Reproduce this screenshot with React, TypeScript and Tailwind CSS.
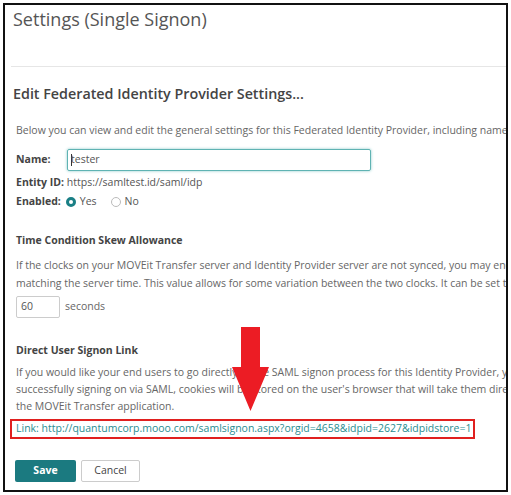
import React from "react";

const Label = ({ children }: { children: React.ReactNode }) => (
  <span className="font-bold text-[#444]">{children}</span>
);

export default function App() {
  return (
    <div
      className="w-[511px] h-[495px] bg-white p-[3px]"
      style={{ fontFamily: '"Open Sans", "Liberation Sans", sans-serif' }}
    >
      <div className="relative h-full border-2 border-[#111] overflow-hidden bg-white text-[10.5px] text-[#666]">
        <div className="pl-[8px] pt-[2px]">
          <h1 className="text-[18px] leading-[24px] text-[#555] whitespace-nowrap">
            Settings (Single Signon)
          </h1>
          <div className="mt-[35px] ml-[-2px] h-px bg-[#e6e6e6]" />
          <h2 className="mt-[17px] text-[14.3px] leading-[20px] font-semibold text-[#444] whitespace-nowrap">
            Edit Federated Identity Provider Settings...
          </h2>
        </div>

        <div className="pl-[11px] w-[640px]">
          <p className="mt-[18px] leading-[16px] whitespace-nowrap">
            Below you can view and edit the general settings for this Federated Identity Provider, including name, and
          </p>

          <div className="mt-[11px] flex items-center">
            <div className="w-[51px]">
              <Label>Name:</Label>
            </div>
            <div className="w-[304px] h-[22px] border border-[#5fb3b3] rounded-[2px] shadow-[0_0_3px_#8cc9c9] flex items-center px-[3px] text-[#555]">
              <span className="border-l border-[#333] h-[12px] mr-[-1px]" />
              tester
            </div>
          </div>

          <div className="mt-[2px] leading-[19px] whitespace-nowrap">
            <Label>Entity ID:</Label> <span className="text-[#555]">https://samltest.id/saml/idp</span>
          </div>
          <div className="leading-[19px] flex items-center gap-[4px] whitespace-nowrap">
            <Label>Enabled:</Label>
            <span className="ml-[1px] w-[10px] h-[10px] rounded-full border-[3px] border-[#1a7f85] bg-white" />
            <span className="text-[#555]">Yes</span>
            <span className="ml-[10px] w-[10px] h-[10px] rounded-full border border-[#bbb] bg-white" />
            <span className="text-[#555]">No</span>
          </div>

          <h3 className="mt-[20px] leading-[19px] font-bold text-[#444]">Time Condition Skew Allowance</h3>
          <p className="mt-[6px] leading-[18px] whitespace-nowrap">
            If the clocks on your MOVEit Transfer server and Identity Provider server are not synced, you may encounter
            <br />
            matching the server time. This value allows for some variation between the two clocks. It can be set to
          </p>
          <div className="mt-[4px] flex items-center gap-[5px]">
            <div className="w-[44px] h-[22px] border border-[#ccc] rounded-[2px] flex items-center px-[4px] text-[#555]">
              60
            </div>
            <span>seconds</span>
          </div>

          <h3 className="mt-[23px] leading-[19px] font-bold text-[#444]">Direct User Signon Link</h3>
          <p className="mt-[4px] leading-[17px] whitespace-nowrap">
            If you would like your end users to go directly to the SAML signon process for this Identity Provider, you
            <br />
            successfully signing on via SAML, cookies will be stored on the user's browser that will take them directly
            <br />
            the MOVEit Transfer application.
          </p>
        </div>

        <div className="mt-[4px] ml-[5px] w-[465px] h-[20px] border-2 border-[#e0201f] flex items-center pl-[4px] text-[#2a8c91] whitespace-nowrap">
          Link: http://quantumcorp.mooo.com/samlsignon.aspx?orgid=4658&amp;idpid=2627&amp;idpidstore=1
        </div>

        <div className="mt-[21px] ml-[10px] flex gap-[5px]">
          <button className="w-[61px] h-[22px] bg-[#1b7a80] rounded-[2px] text-white font-bold">Save</button>
          <button className="w-[59px] h-[22px] bg-white border border-[#ccc] rounded-[2px] text-[#444]">Cancel</button>
        </div>

        <svg
          className="absolute left-[226px] top-[322px]"
          width="40"
          height="84"
          viewBox="0 0 40 84"
        >
          <path d="M10 0 H29 V40 H38 L19.5 84 L1 40 H10 Z" fill="#ec1c24" />
        </svg>
      </div>
    </div>
  );
}
